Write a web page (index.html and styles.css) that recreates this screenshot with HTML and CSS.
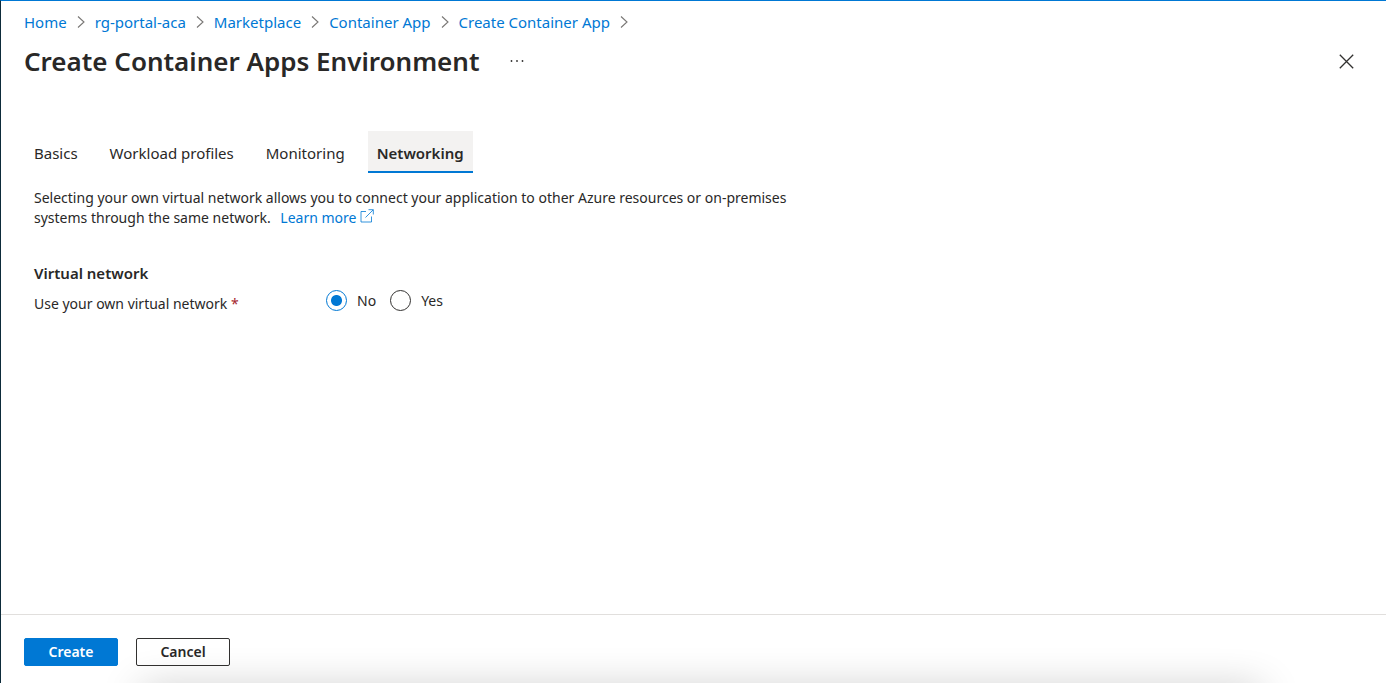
FILE: index.html
```
<!DOCTYPE html>
<html lang="en">
<head>
    <meta charset="UTF-8">
    <meta name="viewport" content="width=device-width, initial-scale=1.0">
    <title>Create Container Apps Environment</title>
    <link rel="stylesheet" href="styles.css">
</head>
<body>
    <div class="blade">
        <nav class="breadcrumb" aria-label="Breadcrumb">
            <a href="#">Home</a>
            <svg class="chevron" viewBox="0 0 8 14"><path d="M1 1.5 L7 7 L1 12.5"/></svg>
            <a href="#">rg-portal-aca</a>
            <svg class="chevron" viewBox="0 0 8 14"><path d="M1 1.5 L7 7 L1 12.5"/></svg>
            <a href="#">Marketplace</a>
            <svg class="chevron" viewBox="0 0 8 14"><path d="M1 1.5 L7 7 L1 12.5"/></svg>
            <a href="#">Container App</a>
            <svg class="chevron" viewBox="0 0 8 14"><path d="M1 1.5 L7 7 L1 12.5"/></svg>
            <a href="#">Create Container App</a>
            <svg class="chevron" viewBox="0 0 8 14"><path d="M1 1.5 L7 7 L1 12.5"/></svg>
        </nav>

        <header class="title-bar">
            <h1>Create Container Apps Environment</h1>
            <button class="icon-button" type="button" aria-label="More">
                <svg width="14" height="4" viewBox="0 0 14 4" fill="#323130"><circle cx="1.5" cy="2" r="0.9"/><circle cx="7" cy="2" r="0.9"/><circle cx="12.5" cy="2" r="0.9"/></svg>
            </button>
            <button class="icon-button close" type="button" aria-label="Close">
                <svg width="15" height="15" viewBox="0 0 15 15" fill="none" stroke="#323130" stroke-width="1.3"><path d="M0.8 0.8 L14.2 14.2 M14.2 0.8 L0.8 14.2"/></svg>
            </button>
        </header>

        <main class="content">
            <div class="tabs" role="tablist">
                <button class="tab" type="button" role="tab">Basics</button>
                <button class="tab" type="button" role="tab">Workload profiles</button>
                <button class="tab" type="button" role="tab">Monitoring</button>
                <button class="tab selected" type="button" role="tab" aria-selected="true">Networking</button>
            </div>

            <p class="description">
                Selecting your own virtual network allows you to connect your application to other Azure resources or on-premises
                <span>systems through the same network.</span>
                <a class="learn-more" href="#">Learn more<svg width="14" height="14" viewBox="0 0 14 14" fill="none" stroke="#0078d4" stroke-width="0.8"><path d="M6 2.5 H1 V13 H11.5 V7.5 M8.5 0.7 H13.3 V5.5 M13.2 0.8 L5.5 8.5"/></svg></a>
            </p>

            <h2>Virtual network</h2>
            <div class="field" role="radiogroup" aria-labelledby="vnet-label">
                <span class="field-label" id="vnet-label">Use your own virtual network <span class="required">*</span></span>
                <div class="options">
                    <label class="option"><input type="radio" name="vnet" checked>No</label>
                    <label class="option"><input type="radio" name="vnet">Yes</label>
                </div>
            </div>
        </main>

        <footer class="footer">
            <button class="button primary" type="button">Create</button>
            <button class="button" type="button">Cancel</button>
        </footer>
    </div>
</body>
</html>
```
FILE: styles.css
```
* {
    box-sizing: border-box;
}

body {
    margin: 0;
    padding: 0 4px 4px 0;
    height: 100vh;
    background: #fff;
    color: #292827;
    font-family: "Noto Sans", "Open Sans", sans-serif;
    font-size: 14px;
    line-height: 20px;
}

a {
    color: #0078d4;
    text-decoration: none;
}

button {
    font-family: inherit;
    color: inherit;
    cursor: pointer;
}

.blade {
    position: relative;
    display: flex;
    flex-direction: column;
    height: 100%;
    overflow: hidden;
    border-top: 1px solid #0078d4;
    border-left: 1px solid #0d2b3a;
}

/* shadow rising from the bottom edge */
.blade::after {
    content: "";
    position: absolute;
    left: 140px;
    right: 125px;
    top: 100%;
    height: 20px;
    box-shadow: 0 8px 40px rgba(0, 0, 0, 0.3);
    pointer-events: none;
}

.breadcrumb {
    display: flex;
    align-items: center;
    gap: 10px;
    padding: 9px 23px 0;
    font-size: 15px;
    line-height: 24px;
}

.chevron {
    width: 8px;
    height: 14px;
    fill: none;
    stroke: #797775;
    stroke-width: 1.1;
}

.title-bar {
    display: flex;
    align-items: center;
    padding: 9px 32px 0 23px;
}

h1 {
    margin: 0 31px 0 0;
    font-size: 26px;
    font-weight: 600;
    line-height: 36px;
}

.icon-button {
    display: flex;
    padding: 0;
    border: 0;
    background: none;
}

.close {
    margin-left: auto;
}

.content {
    flex: 1;
    padding: 52px 24px 0;
}

.tabs {
    display: flex;
    gap: 14px;
}

.tab {
    height: 42px;
    padding: 4px 9px 0;
    border: 0;
    border-bottom: 2px solid transparent;
    background: none;
    font-size: 15px;
}

.tab.selected {
    border-bottom-color: #0078d4;
    background: #f3f2f1;
    font-weight: 600;
}

.description {
    max-width: 800px;
    margin: 15px 0 0;
    padding: 0 9px;
}

.learn-more {
    margin-left: 6px;
}

.learn-more svg {
    margin-left: 4px;
}

h2 {
    margin: 35px 0 0;
    padding: 0 9px;
    font-size: 15px;
    font-weight: 600;
    line-height: 20px;
}

.field {
    display: flex;
    align-items: flex-start;
    margin-top: 7px;
    padding: 0 9px;
}

.field-label {
    width: 292px;
    padding-top: 4px;
}

.required {
    color: #a4262c;
}

.options {
    display: flex;
    gap: 14px;
}

.option {
    display: flex;
    align-items: center;
    gap: 10px;
}

.option input {
    appearance: none;
    width: 21px;
    height: 21px;
    margin: 0;
    border: 1px solid #323130;
    border-radius: 50%;
    background: #fff;
}

.option input:checked {
    border-color: #0078d4;
    background: radial-gradient(circle, #0078d4 5px, #fff 6px);
}

.footer {
    display: flex;
    gap: 18px;
    padding: 23px 23px 17px;
    border-top: 1px solid #e1dfdd;
}

.button {
    width: 94px;
    height: 28px;
    padding: 0 0 2px;
    border: 1px solid #323130;
    border-radius: 2px;
    background: #fff;
    font-size: 14px;
    font-weight: 600;
}

.button.primary {
    border-color: #0078d4;
    background: #0078d4;
    color: #fff;
}
```
